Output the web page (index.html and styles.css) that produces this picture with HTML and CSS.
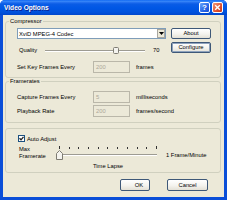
FILE: index.html
```html
<!DOCTYPE html>
<html>
<head>
<meta charset="utf-8">
<link rel="stylesheet" href="styles.css">
</head>
<body>
<div class="window">
  <div class="titlebar">
    <span class="title">Video Options</span>
    <span class="tbtn help">?</span>
    <span class="tbtn close"><svg width="9" height="9" viewBox="0 0 9 9"><path d="M2.2 2.2L6.8 6.8M6.8 2.2L2.2 6.8" stroke="#fff" stroke-width="1.4" fill="none"/></svg></span>
  </div>
  <div class="client">
    <fieldset class="group">
      <legend>Compressor</legend>
      <div class="comp-body">
        <div class="comp-left">
          <div class="select">
            <span class="select-text">XviD MPEG-4 Codec</span>
            <span class="select-arrow"><svg width="5" height="3" viewBox="0 0 5 3"><path d="M0 0H5L2.5 3Z" fill="#000"/></svg></span>
          </div>
          <div class="row quality-row">
            <span class="quality-lbl">Quality</span>
            <svg class="qslider" width="100" height="10" viewBox="0 0 100 10">
              <rect x="0" y="5" width="100" height="1" fill="#9D9B92"/>
              <rect x="0" y="6" width="100" height="1" fill="#FFFFFF"/>
              <rect x="68.5" y="2.5" width="5" height="6" rx="1" fill="#F4F3EE" stroke="#7E7C73"/>
            </svg>
            <span class="value">70</span>
          </div>
          <div class="row field-row">
            <span class="field-lbl">Set Key Frames Every</span>
            <span class="input">200</span>
            <span class="unit">frames</span>
          </div>
        </div>
        <div class="comp-right">
          <button class="btn">About</button>
          <button class="btn default">Configure</button>
        </div>
      </div>
    </fieldset>

    <fieldset class="group">
      <legend>Framerates</legend>
      <div class="rate-body">
        <div class="row field-row">
          <span class="field-lbl">Capture Frames Every</span>
          <span class="input">5</span>
          <span class="unit">milliseconds</span>
        </div>
        <div class="row field-row">
          <span class="field-lbl">Playback Rate</span>
          <span class="input">200</span>
          <span class="unit">frames/second</span>
        </div>
      </div>
    </fieldset>

    <fieldset class="group adjust">
      <div class="adjust-body">
        <div class="check-row">
          <span class="check"><svg width="5" height="5" viewBox="0 0 5 5"><path d="M0.5 2.3L2 3.8L4.5 0.8" stroke="#222" stroke-width="1.3" fill="none"/></svg></span>
          <span>Auto Adjust</span>
        </div>
        <div class="slider-grid">
          <span class="max-lbl">Max<br>Framerate</span>
          <svg class="fslider" width="104" height="14" viewBox="0 0 104 14">
            <rect x="3" y="0" width="1" height="3" fill="#333"/>
            <rect x="13" y="1" width="1" height="2" fill="#333"/>
            <rect x="22" y="1" width="1" height="2" fill="#333"/>
            <rect x="32" y="1" width="1" height="2" fill="#333"/>
            <rect x="42" y="1" width="1" height="2" fill="#333"/>
            <rect x="51" y="1" width="1" height="2" fill="#333"/>
            <rect x="61" y="1" width="1" height="2" fill="#333"/>
            <rect x="71" y="1" width="1" height="2" fill="#333"/>
            <rect x="81" y="1" width="1" height="2" fill="#333"/>
            <rect x="90" y="1" width="1" height="2" fill="#333"/>
            <rect x="100" y="0" width="1" height="3" fill="#333"/>
            <rect x="4" y="8" width="97" height="1" fill="#9D9B92"/>
            <rect x="4" y="9" width="97" height="1" fill="#FFFFFF"/>
            <path d="M0.5 13.5V7.5L3.5 4.5L6.5 7.5V13.5Z" fill="#F4F3EE" stroke="#7E7C73"/>
          </svg>
          <span class="right-lbl">1 Frame/Minute</span>
          <span class="caption">Time Lapse</span>
        </div>
      </div>
    </fieldset>

    <div class="footer">
      <button class="btn ok">OK</button>
      <button class="btn cancel">Cancel</button>
    </div>
  </div>
</div>
</body>
</html>
```

FILE: styles.css
```css
* { box-sizing: border-box; }
html, body { margin: 0; padding: 0; }
body {
  font-family: "Liberation Sans", Arial, sans-serif;
  font-size: 5.8px;
  color: #000;
  background: #ffffff;
}
.window {
  width: 227px;
  height: 200px;
  display: flex;
  flex-direction: column;
  background: #0A4ED8;
  border-radius: 5px 5px 0 0;
  overflow: hidden;
}
.titlebar {
  flex: none;
  height: 15px;
  display: flex;
  align-items: center;
  gap: 2px;
  padding: 0 4px 0 4px;
  background: linear-gradient(to bottom, #0058EE 0px, #3D8FFB 1px, #2A76F3 2px, #0A5CE6 4px, #0057E5 8px, #0052DD 12px, #0046CC 15px);
}
.title {
  flex: 1;
  font-weight: bold;
  font-size: 6.6px;
  color: #fff;
  text-shadow: 1px 1px 0 #0A1F8F;
}
.tbtn {
  width: 11px;
  height: 11px;
  border: 1px solid #fff;
  border-radius: 2px;
  display: flex;
  align-items: center;
  justify-content: center;
}
.help {
  background: linear-gradient(135deg, #6AA5FB, #2766E8 60%, #1A4ED0);
  color: #fff;
  font-weight: bold;
  font-size: 8px;
  line-height: 9px;
}
.close {
  background: linear-gradient(135deg, #F29A7C, #E1502F 60%, #C2361A);
}
.client {
  flex: 1;
  margin: 0 3px 3px 3px;
  background: #ECE9D8;
  padding: 3px 3px 0 2px;
  display: flex;
  flex-direction: column;
}
.group {
  margin: 0;
  padding: 0;
  min-width: 0;
  border: 1px solid #D0D0BF;
  border-radius: 3px;
}
.group legend {
  margin-left: 3px;
  padding: 0 1px;
  line-height: 7px;
}
.comp-body {
  display: flex;
  gap: 5px;
  padding: 3px 0 4px 11px;
}
.comp-left { width: 149px; display: flex; flex-direction: column; }
.comp-right { width: 40px; display: flex; flex-direction: column; gap: 3px; }
.select {
  height: 11px;
  display: flex;
  align-items: center;
  background: #fff;
  border: 1px solid #7F9DB9;
}
.select-text { flex: 1; padding-left: 1px; }
.select-arrow {
  width: 8px;
  height: 9px;
  border: 1px solid #A9A7A0;
  background: #ECE9D8;
  display: flex;
  align-items: center;
  justify-content: center;
}
.row { display: flex; align-items: center; }
.quality-row { height: 10px; margin-top: 6px; }
.quality-lbl { width: 28px; padding-left: 2px; }
.qslider { display: block; flex: none; }
.value { margin-left: 8px; }
.field-row { height: 12px; }
.comp-left .field-row { margin-top: 6px; }
.field-lbl { width: 76px; }
.input {
  width: 37px;
  height: 12px;
  border: 1px solid #BAB7A9;
  background: #ECE9D8;
  color: #ACA899;
  padding-left: 2px;
  display: flex;
  align-items: center;
}
.unit { margin-left: 6px; }
.rate-body {
  display: flex;
  flex-direction: column;
  gap: 2px;
  padding: 6px 0 5px 11px;
}
.adjust { margin-top: 5px; }
.adjust-body { padding: 6px 0 2px 12px; }
.check-row { display: flex; align-items: center; gap: 2px; height: 7px; }
.check {
  width: 7px;
  height: 7px;
  border: 1px solid #1C5180;
  background: #fff;
  display: flex;
  align-items: center;
  justify-content: center;
}
.slider-grid {
  display: grid;
  grid-template-columns: 37px 104px auto;
  grid-template-rows: 14px 7px;
  row-gap: 3px;
  margin-top: 4px;
  margin-left: 1px;
}
.max-lbl { line-height: 7px; }
.fslider { display: block; }
.right-lbl { margin-left: 6px; margin-top: 5.5px; line-height: 7px; align-self: start; }
.caption { grid-column: 2; text-align: center; line-height: 7px; }
.btn {
  font: inherit;
  color: #000;
  height: 11px;
  padding: 0;
  border: 1px solid #3E5878;
  border-radius: 2px;
  background: linear-gradient(to bottom, #FFFFFF, #F4F3EE 55%, #E3E0D5);
  line-height: 9px;
}
.btn.default { box-shadow: inset 0 0 0 1px #8FA3BD; }
.footer {
  display: flex;
  justify-content: flex-end;
  gap: 17px;
  margin-top: 6px;
  padding-right: 13px;
}
.footer .btn { height: 12px; }
.ok { width: 30px; padding-left: 8px; }
.cancel { width: 41px; }
```
